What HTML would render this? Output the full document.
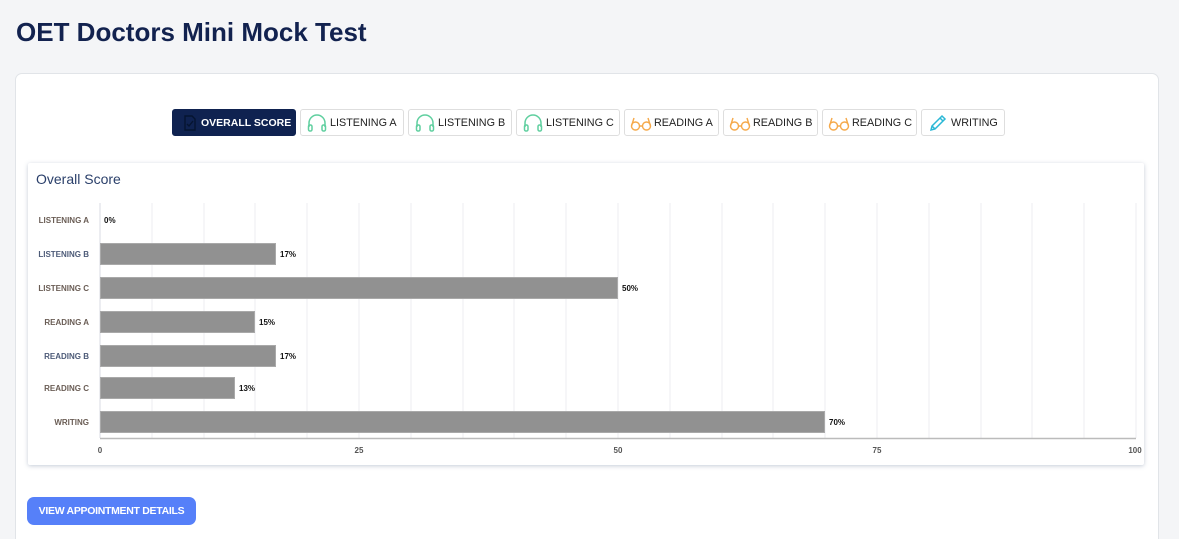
<!DOCTYPE html>
<html><head><meta charset="utf-8"><style>
*{box-sizing:border-box;margin:0;padding:0}
html,body{width:1179px;height:539px;overflow:hidden}
body{background:#f4f5f7;font-family:"Liberation Sans",sans-serif;position:relative}
h1{position:absolute;left:16px;top:17px;font-size:26px;font-weight:bold;color:#12224f;letter-spacing:0}
.card{position:absolute;left:15px;top:73px;width:1144px;height:480px;background:#fff;border:1px solid #e1e4e8;border-radius:7px}
.tab{position:absolute;top:109px;height:27px;border:1px solid #dedede;border-radius:3px;background:#fff;font-size:10.8px;color:#222;display:flex;align-items:center;padding-left:5px;gap:2px;white-space:nowrap;overflow:hidden}
.tab svg{flex-shrink:0}
.tab.act{background:#0f2250;color:#fff;border-color:#0f2250;font-weight:bold;padding-left:8px;font-size:10.5px}
.chart{position:absolute;left:28px;top:163px;width:1116px;height:302px;background:#fff;box-shadow:0 1px 4px rgba(90,110,140,.35);border-radius:2px}
.btn{position:absolute;left:27px;top:497px;width:169px;height:28px;background:#5680f9;border-radius:7px;color:#fff;font-size:10.5px;font-weight:bold;display:flex;align-items:center;justify-content:center;letter-spacing:-0.3px}
</style></head><body>
<h1>OET Doctors Mini Mock Test</h1>
<div class="card"></div>
<div class="tab act" style="left:172px;width:124px"><svg width="18" height="18" viewBox="0 0 18 18" fill="none" stroke="#051430" stroke-width="1.4"><path d="M4 2h7l3 3v11H4z"/><path d="M6 10l2 2 4-5"/></svg>OVERALL SCORE</div>
<div class="tab" style="left:300px;width:104px"><svg width="22" height="18" viewBox="0 0 22 18" fill="none" stroke="#5fcf9f" stroke-width="1.5"><path d="M3 13V9a8 8 0 0 1 16 0v4"/><rect x="2.5" y="11" width="3.5" height="6" rx="1.5"/><rect x="16" y="11" width="3.5" height="6" rx="1.5"/></svg>LISTENING A</div>
<div class="tab" style="left:408px;width:104px"><svg width="22" height="18" viewBox="0 0 22 18" fill="none" stroke="#5fcf9f" stroke-width="1.5"><path d="M3 13V9a8 8 0 0 1 16 0v4"/><rect x="2.5" y="11" width="3.5" height="6" rx="1.5"/><rect x="16" y="11" width="3.5" height="6" rx="1.5"/></svg>LISTENING B</div>
<div class="tab" style="left:516px;width:104px"><svg width="22" height="18" viewBox="0 0 22 18" fill="none" stroke="#5fcf9f" stroke-width="1.5"><path d="M3 13V9a8 8 0 0 1 16 0v4"/><rect x="2.5" y="11" width="3.5" height="6" rx="1.5"/><rect x="16" y="11" width="3.5" height="6" rx="1.5"/></svg>LISTENING C</div>
<div class="tab" style="left:624px;width:95px"><svg width="22" height="18" viewBox="0 0 22 18" fill="none" stroke="#f5a94a" stroke-width="1.4"><circle cx="5.5" cy="12" r="4"/><circle cx="16.5" cy="12" r="4"/><path d="M9.5 12h3M1.5 12L4 4M20.5 12L18 4"/></svg>READING A</div>
<div class="tab" style="left:723px;width:95px"><svg width="22" height="18" viewBox="0 0 22 18" fill="none" stroke="#f5a94a" stroke-width="1.4"><circle cx="5.5" cy="12" r="4"/><circle cx="16.5" cy="12" r="4"/><path d="M9.5 12h3M1.5 12L4 4M20.5 12L18 4"/></svg>READING B</div>
<div class="tab" style="left:822px;width:95px"><svg width="22" height="18" viewBox="0 0 22 18" fill="none" stroke="#f5a94a" stroke-width="1.4"><circle cx="5.5" cy="12" r="4"/><circle cx="16.5" cy="12" r="4"/><path d="M9.5 12h3M1.5 12L4 4M20.5 12L18 4"/></svg>READING C</div>
<div class="tab" style="left:921px;width:84px"><svg width="22" height="20" viewBox="0 0 20 20" fill="none" stroke="#2bb8d6" stroke-width="1.5"><path d="M3 17l1-4L14 3l3 3L7 16z"/><path d="M12 5l3 3M4 13l3 3"/></svg>WRITING</div>
<div class="chart"></div>
<div style="position:absolute;left:36px;top:171px;font-size:14px;color:#2a3f6a">Overall Score</div>
<svg style="position:absolute;left:0;top:0" width="1179" height="539" font-family="Liberation Sans, sans-serif">
<g stroke="#ececf0" stroke-width="1">
<line x1="152" y1="203" x2="152" y2="438"/><line x1="204" y1="203" x2="204" y2="438"/><line x1="255" y1="203" x2="255" y2="438"/><line x1="307" y1="203" x2="307" y2="438"/><line x1="359" y1="203" x2="359" y2="438"/><line x1="411" y1="203" x2="411" y2="438"/><line x1="463" y1="203" x2="463" y2="438"/><line x1="514" y1="203" x2="514" y2="438"/><line x1="566" y1="203" x2="566" y2="438"/><line x1="618" y1="203" x2="618" y2="438"/><line x1="670" y1="203" x2="670" y2="438"/><line x1="722" y1="203" x2="722" y2="438"/><line x1="773" y1="203" x2="773" y2="438"/><line x1="825" y1="203" x2="825" y2="438"/><line x1="877" y1="203" x2="877" y2="438"/><line x1="929" y1="203" x2="929" y2="438"/><line x1="981" y1="203" x2="981" y2="438"/><line x1="1032" y1="203" x2="1032" y2="438"/><line x1="1084" y1="203" x2="1084" y2="438"/><line x1="1136" y1="203" x2="1136" y2="438"/>
</g>
<line x1="100" y1="203" x2="100" y2="438" stroke="#d8dbe3"/>
<line x1="100" y1="438.5" x2="1136" y2="438.5" stroke="#bbb" stroke-width="1.5"/>
<g fill="#919191" stroke="#a9a9a9">
<rect x="100.5" y="243.5" width="175" height="21"/>
<rect x="100.5" y="277.5" width="517" height="21"/>
<rect x="100.5" y="311.5" width="154" height="21"/>
<rect x="100.5" y="345.5" width="175" height="21"/>
<rect x="100.5" y="377.5" width="134" height="21"/>
<rect x="100.5" y="411.5" width="724" height="21"/>
</g>
<g font-size="8" font-weight="bold" fill="#111">
<text x="104" y="223">0%</text><text x="280" y="257">17%</text><text x="622" y="291">50%</text><text x="259" y="325">15%</text><text x="280" y="359">17%</text><text x="239" y="391">13%</text><text x="829" y="425">70%</text>
</g>
<g font-size="8" font-weight="bold" fill="#6a5d55" text-anchor="end">
<text x="89" y="223">LISTENING A</text><text x="89" y="257" fill="#4d5b78">LISTENING B</text><text x="89" y="291">LISTENING C</text><text x="89" y="325">READING A</text><text x="89" y="359" fill="#4d5b78">READING B</text><text x="89" y="391">READING C</text><text x="89" y="425">WRITING</text>
</g>
<g font-size="8" font-weight="bold" fill="#555" text-anchor="middle">
<text x="100" y="453">0</text><text x="359" y="453">25</text><text x="618" y="453">50</text><text x="877" y="453">75</text><text x="1135" y="453">100</text>
</g>
</svg>
<div class="btn">VIEW APPOINTMENT DETAILS</div>
</body></html>
